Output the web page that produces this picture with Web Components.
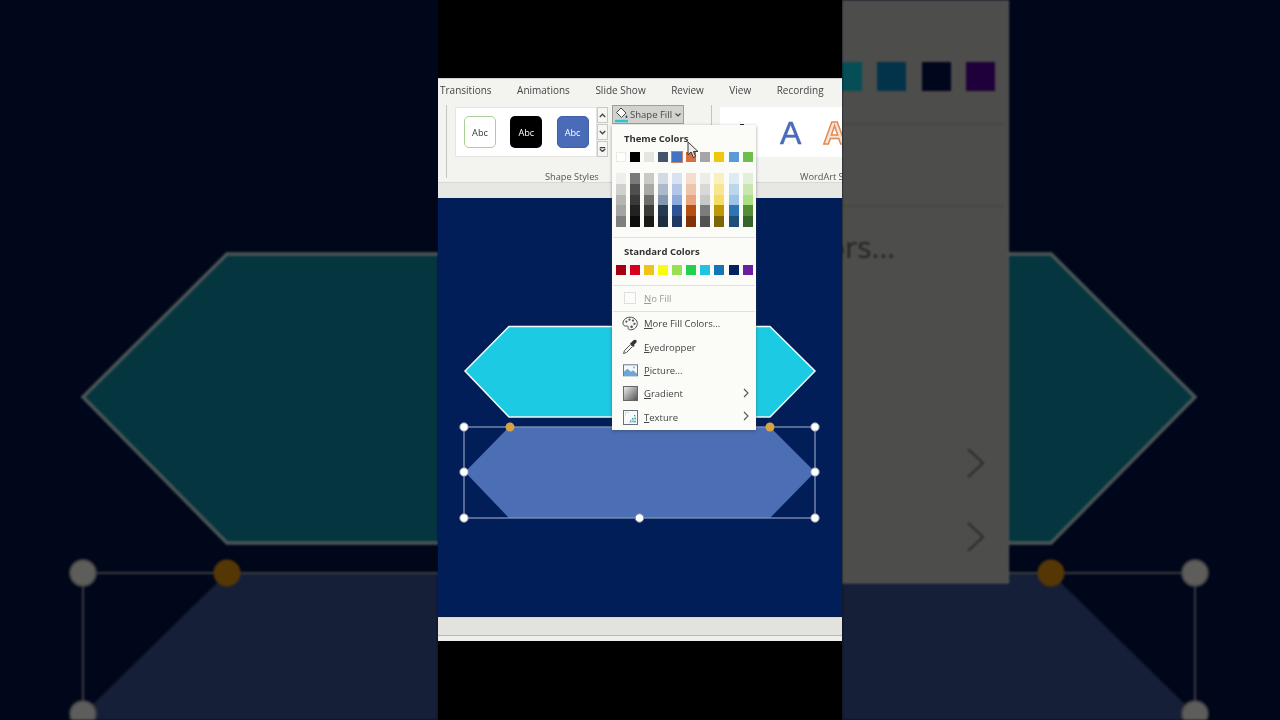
<!DOCTYPE html>
<html>
<head>
<meta charset="utf-8">
<title>Shape Fill</title>
<style>
html, body { margin: 0; height: 100%; background: #000; overflow: hidden; }
body { display: flex; width: 1280px; height: 720px; font-family: "Open Sans", "Liberation Sans", sans-serif; }
</style>
</head>
<body>
<blur-side side="left"></blur-side>
<phone-view></phone-view>
<blur-side side="right"></blur-side>

<script>
const THEME = ['#ffffff','#000000','#e4e4e2','#44546a','#4472c4','#d96d3b','#a5a5a5','#eec90b','#5b9bd5','#6cc04a'];
const TINTS = [
    ['#eeeeec','#d0d0ce','#b5b5b3','#a3a5a3','#7f7f7f'],
    ['#7a7a7a','#4f4f4f','#3a3a3a','#222222','#0c0c0c'],
    ['#c9c9c6','#a8a8a5','#6e6e6b','#3b3b38','#191916'],
    ['#d2dae4','#adb9ca','#8497b0','#263a4f','#1c2d3f'],
    ['#d9e2f3','#b4c6e7','#8eaadb','#2f5496','#1f3864'],
    ['#f6dccf','#efc5a9','#e8a57f','#b5500f','#7f3408'],
    ['#ececea','#d8d8d6','#c7c9c6','#7c7c7c','#525252'],
    ['#f8f0c0','#f8e58f','#f5dc63','#bd9a05','#7c6507'],
    ['#deebf3','#bdd7ea','#9dc3e6','#2e75b5','#1f4e79'],
    ['#e2f0d9','#c6e8b0','#a8e083','#538f35','#37642a']
];
const STANDARD = ['#a50011','#d8001c','#efc31a','#fbfb10','#96e052','#22d050','#1fc4e0','#1476b5','#02215f','#6b1fa0'];

const ICONS = {
    palette: `<svg width="16" height="15" viewBox="0 0 16 15"><path d="M8 1.2C4 1.2 1 3.8 1 7.2c0 2.6 2 3.2 3.4 2.8 1.2-.3 2 .2 1.7 1.4-.3 1.300.6 2.400 2.400 2.400 3.900 0 6.800-2.800 6.800-6.400C15.300 4 12 1.200 8 1.200z" fill="#f7f7f4" stroke="#4a4a4a" stroke-width="1"/><circle cx="4.400" cy="5.600" r="1.100" fill="#555"/><circle cx="7.500" cy="3.700" r="1.100" fill="#555"/><circle cx="11" cy="4.600" r="1.100" fill="#555"/><circle cx="12.400" cy="7.800" r="1.100" fill="#555"/><circle cx="9.600" cy="10.800" r="1.300" fill="#555"/></svg>`,
    dropper: `<svg width="16" height="16" viewBox="0 0 16 16"><path d="M1.500 14.500l1-3 6-6 2 2-6 6z" fill="#f4f4f2" stroke="#555" stroke-width="1"/><path d="M8 4.500l1.500-1.200 2-2c.8-.8 2.200-.8 2.800 0 .6.800.5 1.800-.2 2.500l-2 2 .4 1.400-1.200.6-3.300-3.300z" fill="#333"/></svg>`,
    picture: `<svg width="15" height="13" viewBox="0 0 15 13"><rect x=".5" y=".8" width="14" height="11" fill="#f5f8fb" stroke="#6a7a88"/><path d="M1 11.300V7.500l3.500-2.800 3.500 3 2-1.400 4 3.500v1.500z" fill="#6ea6d8"/><circle cx="11" cy="3.600" r="1" fill="#7fb1dd"/></svg>`,
    gradient: `<svg width="15" height="15" viewBox="0 0 15 15"><defs><linearGradient id="g" x1="0" y1="0" x2="1" y2="1"><stop offset="0" stop-color="#f2f2f2"/><stop offset="1" stop-color="#4f4f4f"/></linearGradient></defs><rect x=".5" y=".5" width="14" height="14" fill="url(#g)" stroke="#666"/></svg>`,
    texture: `<svg width="15" height="15" viewBox="0 0 15 15"><rect x=".5" y=".5" width="14" height="14" fill="#fafafa" stroke="#66727a"/><path d="M2 2h4v1H3v3H2zM13 5v8H5z" fill="#cfe3ea"/><g fill="#2f8fa8"><rect x="11" y="5" width="1.200" height="1.200"/><rect x="9" y="8" width="1.200" height="1.200"/><rect x="11.500" y="8" width="1.200" height="1.200"/><rect x="7" y="10.500" width="1.200" height="1.200"/><rect x="9.500" y="10.500" width="1.200" height="1.200"/><rect x="11.500" y="11" width="1.200" height="1.200"/></g></svg>`
};

// one side of the blurred video backdrop, drawn on a free canvas
class BlurSide extends HTMLElement {
    connectedCallback() {
        const left = this.getAttribute('side') === 'left';
        const root = this.attachShadow({ mode: 'open' });
        const ox = left ? 0 : 842;
        let art = '';
        art += `<polygon points="83,397 227,254 1051,254 1195,397 1051,543 227,543" fill="#05353f" stroke="#4c5758" stroke-width="3.500"/>`;
        art += `<polygon points="83,714 227,573 1051,573 1195,714 1051,870 227,870" fill="#161f38"/>`;
        art += `<path d="M83 573H1195M83 573V714M1195 573V714" fill="none" stroke="#3a3d42" stroke-width="2"/>`;
        art += `<g fill="#5d5e5c" stroke="#444" stroke-width="2"><circle cx="83" cy="573" r="13"/><circle cx="1195" cy="573" r="13"/><circle cx="83" cy="714" r="13"/><circle cx="1195" cy="714" r="13"/></g>`;
        art += `<g fill="#553706"><circle cx="227" cy="573" r="13.500"/><circle cx="1051" cy="573" r="13.500"/></g>`;
        if (!left) {
            art += `<rect x="800" y="-5" width="208.500" height="588" fill="#4d4d4b" stroke="#5a5a58" stroke-width="1"/>`;
            art += `<path d="M800 124H1002M800 206H1004" stroke="#444442" stroke-width="1.500"/>`;
            art += `<rect x="833" y="62" width="29" height="29" fill="#064e55"/><rect x="877" y="62" width="29" height="29" fill="#03334a"/><rect x="922" y="62" width="29" height="29" fill="#00061c"/><rect x="966" y="62" width="29" height="29" fill="#20003a"/>`;
            art += `<text x="827" y="258" font-family="Open Sans, sans-serif" font-size="30" fill="#232322">ors...</text>`;
            art += `<path d="M968 449l15 14-15 14M968 523l15 14-15 14" fill="none" stroke="#2a2a29" stroke-width="2"/>`;
        }
        root.innerHTML = `
          <style>
            :host { display: block; width: 438px; height: 720px; background: #00071a; overflow: hidden; }
            svg { display: block; filter: blur(1px); }
          </style>
          <svg width="438" height="720" viewBox="${ox} 0 438 720">${art}</svg>`;
    }
}

class RibbonTabs extends HTMLElement {
    connectedCallback() {
        const names = ['Transitions', 'Animations', 'Slide Show', 'Review', 'View', 'Recording'];
        this.attachShadow({ mode: 'open' }).innerHTML = `
          <style>
            :host { display: flex; height: 21px; align-items: center; gap: 25.500px; padding-left: 2px; box-sizing: border-box;
                    font-size: 10px; color: #444; white-space: nowrap; }
          </style>
          ${names.map(n => `<span>${n}</span>`).join('')}`;
    }
}

class AbcButton extends HTMLElement {
    connectedCallback() {
        this.attachShadow({ mode: 'open' }).innerHTML = `
          <style>
            :host { display: flex; width: 32px; height: 32px; box-sizing: border-box; border-radius: 5px; align-items: center; justify-content: center;
                    font-size: 9.200px; }
            :host([kind=outline]) { background: #fff; border: 1.500px solid #a9cf94; color: #333; }
            :host([kind=black]) { background: #000; color: #fff; }
            :host([kind=blue]) { background: #4a6cb8; border: 1px solid #3f5fa6; color: #fff; }
          </style><slot></slot>`;
    }
}

class ShapeGallery extends HTMLElement {
    connectedCallback() {
        const chev = (d) => `<svg width="7" height="5" viewBox="0 0 7 5"><path d="${d}" fill="none" stroke="#444" stroke-width="1.300"/></svg>`;
        this.attachShadow({ mode: 'open' }).innerHTML = `
          <style>
            :host { display: flex; align-items: flex-start; }
            .box { width: 142px; height: 50px; box-sizing: border-box; background: #fff; border: 1px solid #e4e4e0; display: flex; align-items: center;
                   gap: 14.300px; padding-left: 8px; margin-top: 2px; }
            .scroll { display: flex; flex-direction: column; gap: 1px; margin-top: 2px; }
            .scroll div { width: 11px; height: 16px; box-sizing: border-box; background: #f6f6f3; border: 1px solid #c8c8c4; display: flex; align-items: center; justify-content: center; }
          </style>
          <div class="box"><slot></slot></div>
          <div class="scroll">
            <div>${chev('M.8 4L3.500 1.200 6.200 4')}</div>
            <div>${chev('M.8 1L3.500 3.800 6.200 1')}</div>
            <div>${chev('M.8 .6H6.200M.8 2L3.500 4.500 6.200 2')}</div>
          </div>`;
    }
}

class FillButton extends HTMLElement {
    connectedCallback() {
        this.attachShadow({ mode: 'open' }).innerHTML = `
          <style>
            :host { display: flex; align-items: center; width: 72px; height: 19px; box-sizing: border-box; background: #d2d2ce; border: 1px solid #9f9f9a;
                    font-size: 9.500px; color: #4a4a4a; white-space: nowrap; padding-left: 2px; }
            svg { flex: none; }
            .t { margin-left: 2px; }
            .c { margin-left: 3px; }
          </style>
          <svg width="13" height="16" viewBox="0 0 13 16"><path d="M6 1l5 5-4.500 4.500-5-5z" fill="#fbfbf9" stroke="#444" stroke-width="1"/><path d="M11.500 8c.8 1.200 1 1.600 1 2a1 1 0 0 1-2 0c0-.4.300-.8 1-2z" fill="#444"/><rect x="0" y="12.800" width="13" height="2.500" fill="#2cc3d8"/></svg>
          <span class="t">Shape Fill</span>
          <svg class="c" width="6" height="4" viewBox="0 0 6 4"><path d="M.5.500L3 3 5.500.500" fill="none" stroke="#444" stroke-width="1.100"/></svg>`;
    }
}

class RibbonBody extends HTMLElement {
    connectedCallback() {
        this.attachShadow({ mode: 'open' }).innerHTML = `
          <style>
            :host { display: flex; height: 83px; padding-left: 8px; box-sizing: border-box; overflow: hidden; background: #f3f3f0; border-bottom: 1px solid #d8d8d4; }
            .group { display: flex; flex: none; flex-direction: column; border-left: 1px solid #c4c4c0; height: 73px; margin-top: 5px; padding-left: 8px; box-sizing: border-box; }
            .row { display: flex; flex: none; height: 64.500px; align-items: flex-start; }
            .one { width: 265px; }
            .fill { margin-left: 4px; }
            .label { flex: none; font-size: 9.200px; color: #555; padding-left: 90px; white-space: nowrap; }
            .two { width: 140px; }
            .word { width: 200px; height: 50px; margin-top: 2px; background: #fff; position: relative; }
            .label2 { padding-left: 80px; }
            .a { position: absolute; top: 7px; font-size: 32px; line-height: 38px; font-family: "Liberation Sans", sans-serif; }
            .a1 { left: 60px; color: #4a6cb8; -webkit-text-stroke: .5px #4a6cb8; }
            .a2 { left: 103px; color: #fbe3d4; -webkit-text-stroke: 1.500px #e08c58; font-weight: 700; }
            .dash { position: absolute; left: 20px; top: 17px; width: 4px; height: 3px; background: #222; }
          </style>
          <div class="group one">
            <div class="row">
              <shape-gallery>
                <abc-button kind="outline">Abc</abc-button>
                <abc-button kind="black">Abc</abc-button>
                <abc-button kind="blue">Abc</abc-button>
              </shape-gallery>
              <fill-button class="fill"></fill-button>
            </div>
            <div class="label">Shape Styles</div>
          </div>
          <div class="group two">
            <div class="row">
              <div class="word"><i class="dash"></i><span class="a a1">A</span><span class="a a2">A</span></div>
            </div>
            <div class="label label2">WordArt Styles</div>
          </div>`;
    }
}

class SwatchRow extends HTMLElement {
    connectedCallback() {
        const colors = this.getAttribute('colors').split(',');
        const picked = this.getAttribute('picked');
        const cells = colors.map((c, i) => {
            const edge = c === '#ffffff' ? 'box-shadow: inset 0 0 0 1px #eaeae6;' : '';
            return `<i class="${String(i) === picked ? 'on' : ''}" style="background:${c};${edge}"></i>`;
        }).join('');
        this.attachShadow({ mode: 'open' }).innerHTML = `
          <style>
            :host { display: grid; grid-template-columns: repeat(10, 10px); column-gap: 4.150px; padding-left: 3.500px; height: 10px; }
            i { display: block; width: 10px; height: 10px; }
            i.on { outline: 1.500px solid #b98a70; outline-offset: 0.500px; }
          </style>${cells}`;
    }
}

class TintGrid extends HTMLElement {
    connectedCallback() {
        const cols = TINTS.map(col => `<div>${col.map(c => `<i style="background:${c}"></i>`).join('')}</div>`).join('');
        this.attachShadow({ mode: 'open' }).innerHTML = `
          <style>
            :host { display: grid; grid-template-columns: repeat(10, 10px); column-gap: 4.150px; padding-left: 3.500px; height: 54px; }
            i { display: block; width: 10px; height: 10.800px; }
          </style>${cols}`;
    }
}

class MenuRow extends HTMLElement {
    connectedCallback() {
        const icon = ICONS[this.getAttribute('icon')] || '';
        const more = this.hasAttribute('more')
            ? `<svg class="more" width="6" height="10" viewBox="0 0 6 10"><path d="M1 1l4 4-4 4" fill="none" stroke="#555" stroke-width="1.100"/></svg>` : '';
        this.attachShadow({ mode: 'open' }).innerHTML = `
          <style>
            :host { display: flex; align-items: center; height: 23.350px; font-size: 9.500px; color: #444; white-space: nowrap; position: relative; }
            .ic { width: 32px; flex: none; display: flex; justify-content: center; padding-left: 4px; box-sizing: border-box; }
            .more { position: absolute; right: 7px; top: 6px; }
            ::slotted(u) { text-underline-offset: 1px; }
          </style>
          <span class="ic">${icon}</span><span><slot></slot></span>${more}`;
    }
}

class FillMenu extends HTMLElement {
    connectedCallback() {
        this.attachShadow({ mode: 'open' }).innerHTML = `
          <style>
            :host { display: block; position: absolute; left: 174px; top: 47px; width: 144px; height: 305px; box-sizing: border-box;
                    background: #fbfbf8; box-shadow: 0 1px 3px rgba(60,60,60,.5); font-size: 9.500px; color: #333; }
            h4 { margin: 0; font-size: 9.500px; font-weight: 700; padding-left: 12px; color: #333; }
            .h1 { height: 27px; line-height: 27px; }
            .h2 { height: 27px; line-height: 27px; }
            hr { border: 0; height: 1px; background: #e0e0dc; margin: 0 1px; }
            .sp1 { height: 11px; }
            .sp2 { height: 10px; }
            .nofill { display: flex; align-items: center; height: 25px; padding-bottom: 1px; box-sizing: border-box; color: #9a9a98; white-space: nowrap; }
            .nofill i { display: block; width: 12px; height: 12px; box-sizing: border-box; border: 1px solid #e0e0dc; background: #fcfcfa; margin: 0 8px 0 12px; }
            u { text-underline-offset: 1px; }
          </style>
          <h4 class="h1">Theme Colors</h4>
          <swatch-row colors="${THEME.join(',')}" picked="4"></swatch-row>
          <div class="sp1"></div>
          <tint-grid></tint-grid>
          <div class="sp2"></div>
          <hr>
          <h4 class="h2">Standard Colors</h4>
          <swatch-row colors="${STANDARD.join(',')}"></swatch-row>
          <div class="sp2"></div>
          <hr>
          <div class="nofill"><i></i><span><u>N</u>o Fill</span></div>
          <hr>
          <menu-row icon="palette"><u>M</u>ore Fill Colors...</menu-row>
          <menu-row icon="dropper"><u>E</u>yedropper</menu-row>
          <menu-row icon="picture"><u>P</u>icture...</menu-row>
          <menu-row icon="gradient" more><u>G</u>radient</menu-row>
          <menu-row icon="texture" more><u>T</u>exture</menu-row>`;
    }
}

// slide canvas, coordinates in the offset of the full frame
class SlideCanvas extends HTMLElement {
    connectedCallback() {
        const handle = (x, y) => `<circle cx="${x}" cy="${y}" r="4.200" fill="#fff" stroke="#8a94a8" stroke-width="1"/>`;
        this.attachShadow({ mode: 'open' }).innerHTML = `
          <style>
            :host { display: block; height: 419px; background: #011e58; border-bottom: 1px solid #0a1a40; box-sizing: border-box; }
            svg { display: block; }
          </style>
          <svg width="404" height="418" viewBox="438 198 404 418">
            <polygon points="465,371 509,326.500 770,326.500 815,371 770,417 509,417" fill="#1ccbe3" stroke="#f2fafc" stroke-width="1.500"/>
            <polygon points="465,472 509,427 770,427 815,472 770,518 509,518" fill="#4c6eb4"/>
            <rect x="464" y="427" width="351" height="91" fill="none" stroke="#8494b8" stroke-width="1.300"/>
            ${handle(464,427)}${handle(815,427)}${handle(464,472)}${handle(815,472)}${handle(464,518)}${handle(639.500,518)}${handle(815,518)}
            <circle cx="510" cy="427" r="4.500" fill="#d6a345"/><circle cx="770" cy="427" r="4.500" fill="#d6a345"/>
          </svg>`;
    }
}

class PhoneView extends HTMLElement {
    connectedCallback() {
        this.attachShadow({ mode: 'open' }).innerHTML = `
          <style>
            :host { display: flex; flex-direction: column; width: 404px; height: 720px; flex: none; background: #000; }
            .top { height: 78px; flex: none; }
            .ribbon { position: relative; height: 120px; flex: none; background: #e7e7e4; border-top: 1px solid #cfcfcc; box-sizing: border-box; }
            .tabs { background: #f3f3f0; }
            .status { height: 24px; flex: none; background: #e2e2df; border-top: 1px solid #d4d8ea; box-sizing: border-box; position: relative; }
            .status::after { content: ""; position: absolute; left: 0; right: 0; top: 17px; bottom: 0; background: #eeeeea; border-top: 1px solid #b8b8b4; }
            .wrap { position: relative; flex: none; overflow: hidden; filter: blur(.25px); }
            .cursor { position: absolute; left: 249px; top: 63px; }
          </style>
          <div class="top"></div>
          <div class="wrap">
            <div class="ribbon">
              <ribbon-tabs class="tabs"></ribbon-tabs>
              <ribbon-body></ribbon-body>
            </div>
            <slide-canvas></slide-canvas>
            <div class="status"></div>
            <fill-menu></fill-menu>
            <svg class="cursor" width="12" height="19" viewBox="0 0 12 19"><path d="M1 1v13l3-3 2.300 5.500 2.400-1L6.500 10.500H11z" fill="#e9e9e6" fill-opacity=".75" stroke="#3a3a3a" stroke-width="1"/></svg>
          </div>`;
    }
}

customElements.define('blur-side', BlurSide);
customElements.define('ribbon-tabs', RibbonTabs);
customElements.define('abc-button', AbcButton);
customElements.define('shape-gallery', ShapeGallery);
customElements.define('fill-button', FillButton);
customElements.define('ribbon-body', RibbonBody);
customElements.define('swatch-row', SwatchRow);
customElements.define('tint-grid', TintGrid);
customElements.define('menu-row', MenuRow);
customElements.define('fill-menu', FillMenu);
customElements.define('slide-canvas', SlideCanvas);
customElements.define('phone-view', PhoneView);
</script>
</body>
</html>
